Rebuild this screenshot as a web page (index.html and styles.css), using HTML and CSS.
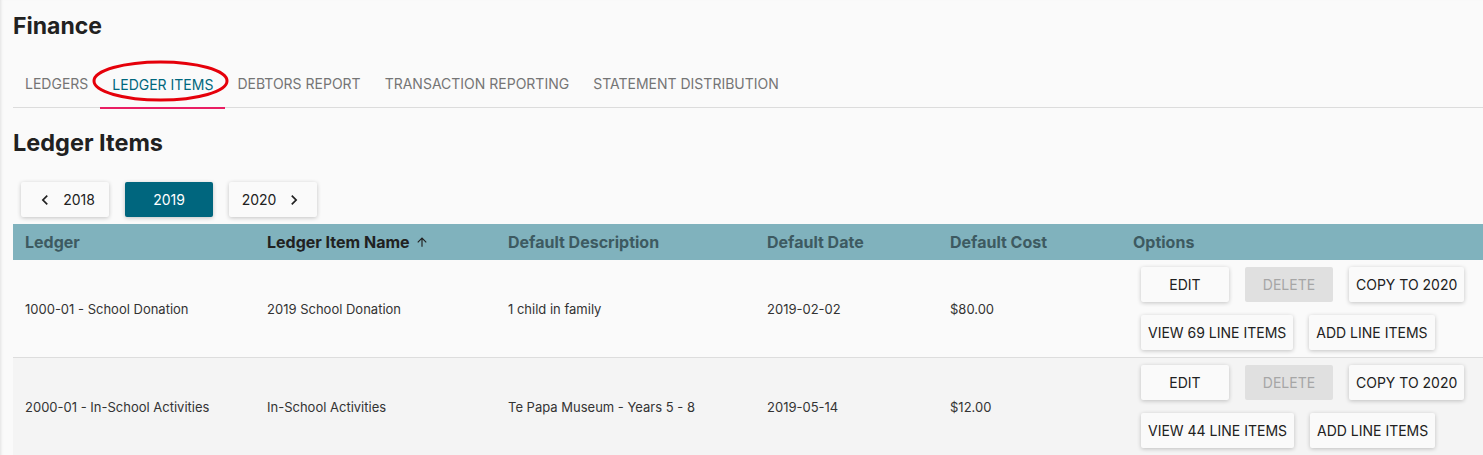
FILE: index.html
```html
<!DOCTYPE html>
<html lang="en">
<head>
    <meta charset="UTF-8">
    <meta name="viewport" content="width=device-width, initial-scale=1.0">
    <title>Finance</title>
    <link rel="stylesheet" href="styles.css">
</head>
<body>
    <div class="page">
        <h1 class="page-title">Finance</h1>

        <nav class="tabs">
            <a class="tab">Ledgers</a>
            <a class="tab tab-active">Ledger Items
                <svg class="tab-mark" viewBox="0 0 137 42" width="137" height="42">
                    <ellipse cx="68.5" cy="21" rx="66.5" ry="19" fill="none" stroke="#e5000a" stroke-width="3"/>
                </svg>
            </a>
            <a class="tab">Debtors Report</a>
            <a class="tab">Transaction Reporting</a>
            <a class="tab">Statement Distribution</a>
        </nav>

        <h2 class="section-title">Ledger Items</h2>

        <div class="years">
            <button class="year-btn">
                <svg viewBox="0 0 24 24" width="20" height="20"><path d="M15.41 7.41 14 6l-6 6 6 6 1.41-1.41L10.83 12z" fill="#212121"/></svg>
                2018
            </button>
            <button class="year-btn year-current">2019</button>
            <button class="year-btn">
                2020
                <svg viewBox="0 0 24 24" width="20" height="20"><path d="M10 6 8.59 7.41 13.17 12l-4.58 4.59L10 18l6-6z" fill="#212121"/></svg>
            </button>
        </div>

        <div class="table">
            <div class="table-row table-head">
                <div class="cell">Ledger</div>
                <div class="cell sorted">Ledger Item Name
                    <svg viewBox="0 0 24 24" width="14" height="14"><path d="M4 12l1.41 1.41L11 7.83V20h2V7.83l5.58 5.59L20 12l-8-8-8 8z" fill="#212121"/></svg>
                </div>
                <div class="cell">Default Description</div>
                <div class="cell">Default Date</div>
                <div class="cell">Default Cost</div>
                <div class="cell">Options</div>
            </div>

            <div class="table-row">
                <div class="cell">1000-01 - School Donation</div>
                <div class="cell">2019 School Donation</div>
                <div class="cell">1 child in family</div>
                <div class="cell">2019-02-02</div>
                <div class="cell">$80.00</div>
                <div class="cell options">
                    <button class="btn">Edit</button>
                    <button class="btn" disabled>Delete</button>
                    <button class="btn">Copy to 2020</button>
                    <button class="btn">View 69 line items</button>
                    <button class="btn">Add line items</button>
                </div>
            </div>

            <div class="table-row row-alt">
                <div class="cell">2000-01 - In-School Activities</div>
                <div class="cell">In-School Activities</div>
                <div class="cell">Te Papa Museum - Years 5 - 8</div>
                <div class="cell">2019-05-14</div>
                <div class="cell">$12.00</div>
                <div class="cell options">
                    <button class="btn">Edit</button>
                    <button class="btn" disabled>Delete</button>
                    <button class="btn">Copy to 2020</button>
                    <button class="btn">View 44 line items</button>
                    <button class="btn">Add line items</button>
                </div>
            </div>
        </div>
    </div>
</body>
</html>
```

FILE: styles.css
```css
body {
    margin: 0;
    background-color: #fafafa;
    color: #212121;
    font-family: Inter, "Noto Sans", sans-serif;
    overflow: hidden;
}

.page {
    padding-left: 13px;
    min-height: 455px;
    box-shadow: inset 3px 0 3px -2px rgba(0, 0, 0, 0.1);
}

.page-title {
    margin: 0;
    padding-top: 12px;
    font-size: 23px;
    line-height: 28px;
    font-weight: 700;
}

.tabs {
    display: flex;
    margin-top: 19px;
    height: 48px;
    border-bottom: 1px solid #dcdcdc;
}

.tab {
    position: relative;
    display: flex;
    align-items: center;
    padding: 0 12px;
    font-size: 14px;
    text-transform: uppercase;
    color: #757575;
    cursor: pointer;
}

.tab-active {
    color: #00687e;
    border-bottom: 2px solid #e91e63;
    height: 46px;
    padding-top: 2px;
}

.tab-mark {
    position: absolute;
    left: -8px;
    top: 1px;
}

.section-title {
    margin: 21px 0 0;
    font-size: 23.5px;
    line-height: 28px;
    font-weight: 700;
}

.years {
    display: flex;
    gap: 16px;
    margin: 25px 0 0 8px;
}

.year-btn {
    display: flex;
    align-items: center;
    justify-content: center;
    gap: 8px;
    min-width: 88px;
    height: 35px;
    padding: 0 12px;
    border: none;
    border-radius: 2px;
    background-color: #fafafa;
    color: #212121;
    font-family: Inter, "Noto Sans", sans-serif;
    font-size: 14px;
    box-shadow: 0 1px 4px rgba(0, 0, 0, 0.22);
}

.year-current {
    background-color: #00667e;
    color: #ffffff;
}

.table {
    margin-top: 7px;
}

.table-row {
    display: grid;
    grid-template-columns: 242px 241px 259px 183px 183px 1fr;
    border-bottom: 1px solid #dddddd;
    font-size: 13px;
    color: #333333;
}

.row-alt {
    background-color: #f4f4f4;
}

.cell {
    display: flex;
    align-items: center;
    padding-left: 12px;
}

.table-head {
    height: 36px;
    background-color: #80b2bd;
    border-bottom: none;
    font-size: 16px;
    font-weight: 700;
    color: #3d5a61;
}

.sorted {
    color: #212121;
    gap: 5px;
}

.options {
    flex-wrap: wrap;
    gap: 13px 16px;
    padding: 7px 0 7px 20px;
}

.btn {
    min-width: 88px;
    height: 35px;
    padding: 0 7px;
    border: none;
    border-radius: 2px;
    background-color: #fafafa;
    color: #212121;
    font-family: Inter, "Noto Sans", sans-serif;
    font-size: 14px;
    text-transform: uppercase;
    box-shadow: 0 1px 4px rgba(0, 0, 0, 0.22);
}

.btn:disabled {
    background-color: #e0e0e0;
    color: #a6a6a6;
    box-shadow: none;
}
```
